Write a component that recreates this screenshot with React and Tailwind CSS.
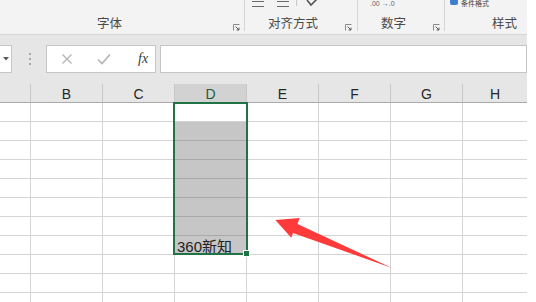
import React from 'react'

const cols = [
  { key: 'A', w: 'w-[31px]', label: '' },
  { key: 'B', w: 'w-[72px]', label: 'B' },
  { key: 'C', w: 'w-[72px]', label: 'C' },
  { key: 'D', w: 'w-[72px]', label: 'D' },
  { key: 'E', w: 'w-[72px]', label: 'E' },
  { key: 'F', w: 'w-[72px]', label: 'F' },
  { key: 'G', w: 'w-[72px]', label: 'G' },
  { key: 'H', w: 'w-[64px]', label: 'H' },
]

const rows = Array.from({ length: 11 }, (_, i) => i + 1)

function Launcher() {
  return (
    <svg width="7" height="7" viewBox="0 0 7 7" className="shrink-0">
      <path d="M0.5 6.5V0.5H6.5" fill="none" stroke="#8a8a8a" strokeWidth="1" />
      <path d="M2.5 2.5L6 6M6 3.6V6H3.6" fill="none" stroke="#5a5a5a" strokeWidth="1" />
    </svg>
  )
}

function Sep() {
  return <div className="w-px h-[31px] bg-[#d5d5d5] shrink-0" />
}

export default function App() {
  return (
    <div className="w-[536px] h-[302px] bg-white overflow-hidden relative font-['Liberation_Sans','Noto_Sans_CJK_SC',sans-serif]">
      <div className="w-[527px] h-full flex flex-col">
        {/* Ribbon */}
        <div className="h-[35px] bg-[#f3f3f3] border-b border-[#d6d6d6] flex shrink-0">
          {/* 字体 */}
          <div className="w-[244px] flex flex-col">
            <div className="h-[9px]" />
            <div className="flex items-center h-[17px] mt-[7px] pl-[97px] pr-[4px]">
              <span className="text-[12.5px] leading-none text-[#4a4a4a]">字体</span>
              <div className="ml-auto mt-[5px]"><Launcher /></div>
            </div>
          </div>
          <Sep />
          {/* 对齐方式 */}
          <div className="w-[112px] flex flex-col">
            <div className="h-[9px] overflow-hidden flex items-start pl-[7px]">
              <div className="flex flex-col gap-[4px] mt-[1px]">
                <div className="w-[12px] h-px bg-[#6a6a6a]" />
                <div className="w-[12px] h-px bg-[#6a6a6a]" />
              </div>
              <div className="flex flex-col gap-[4px] mt-[1px] ml-[13px]">
                <div className="w-[12px] h-px bg-[#6a6a6a]" />
                <div className="w-[12px] h-px bg-[#6a6a6a]" />
              </div>
              <div className="w-px h-[6px] bg-[#c8c8c8] ml-[7px]" />
              <svg width="12" height="8" viewBox="0 0 12 8" className="ml-[9px]">
                <path d="M1 0L5 5L11 -1" fill="none" stroke="#555" strokeWidth="1.6" />
              </svg>
            </div>
            <div className="flex items-center h-[17px] mt-[7px] pl-[23px] pr-[5px]">
              <span className="text-[12.5px] leading-none text-[#4a4a4a]">对齐方式</span>
              <div className="ml-auto mt-[5px]"><Launcher /></div>
            </div>
          </div>
          <Sep />
          {/* 数字 */}
          <div className="w-[86px] flex flex-col">
            <div className="h-[9px] pl-[12px] flex items-start">
              <div className="text-[7px] leading-none text-[#666] whitespace-nowrap">
                .00 <span className="text-[#2b6cc4]">→</span>.0
              </div>
            </div>
            <div className="flex items-center h-[17px] mt-[7px] pl-[23px] pr-[4px]">
              <span className="text-[12.5px] leading-none text-[#4a4a4a]">数字</span>
              <div className="ml-auto mt-[5px]"><Launcher /></div>
            </div>
          </div>
          <Sep />
          {/* 样式 */}
          <div className="flex-1 flex flex-col">
            <div className="h-[9px] pl-[5px] flex items-start">
              <div className="w-[8px] h-[5px] bg-[#3f7fd0] rounded-b-[2px] shrink-0" />
              <div className="ml-[3px] text-[7px] leading-none text-[#444] whitespace-nowrap">条件格式</div>
            </div>
            <div className="flex items-center h-[17px] mt-[7px] pl-[47px]">
              <span className="text-[12.5px] leading-none text-[#4a4a4a]">样式</span>
            </div>
          </div>
        </div>

        {/* Formula bar + column header band */}
        <div className="bg-[#e6e6e6] pt-[10px] shrink-0">
          <div className="h-[28px] flex">
            <div className="w-[12px] bg-white border-y border-r border-[#c6c6c6] flex items-center pl-[3px]">
              <svg width="6" height="4" viewBox="0 0 6 4"><path d="M0 0H6L3 3.5Z" fill="#5a5a5a" /></svg>
            </div>
            <div className="w-[34px] flex flex-col items-center justify-center gap-[3px] pl-[2px]">
              <div className="w-[2px] h-[2px] bg-[#a8a8a8]" />
              <div className="w-[2px] h-[2px] bg-[#a8a8a8]" />
              <div className="w-[2px] h-[2px] bg-[#a8a8a8]" />
            </div>
            <div className="w-[110px] bg-white border border-[#c6c6c6] flex items-center">
              <svg width="12" height="12" viewBox="0 0 12 12" className="ml-[14px]">
                <path d="M1.5 1.5L10.5 10.5M10.5 1.5L1.5 10.5" stroke="#b4b4b4" strokeWidth="1.3" />
              </svg>
              <svg width="14" height="12" viewBox="0 0 14 12" className="ml-[24px]">
                <path d="M1 6.5L5 10.5L13 1.5" fill="none" stroke="#b4b4b4" strokeWidth="1.6" />
              </svg>
              <span className="ml-[27px] font-['Liberation_Serif',serif] italic text-[14px] leading-none text-[#3a3a3a]">fx</span>
            </div>
            <div className="flex-1 ml-[4px] bg-white border border-[#c6c6c6]" />
          </div>
          <div className="h-[11px]" />
          {/* column headers */}
          <div className="h-[19px] flex border-b border-[#ababab]">
            {cols.map((c, i) => (
              <div
                key={c.key}
                className={`${c.w} h-full flex items-end justify-center pb-[1px] ${i < cols.length - 1 ? 'border-r border-[#c8c8c8]' : ''} ${c.key === 'D' ? 'bg-[#d2d2d2]' : ''}`}
              >
                <span className={`text-[14px] leading-none ${c.key === 'D' ? 'text-[#1f5c3c]' : 'text-[#262626]'}`}>{c.label}</span>
              </div>
            ))}
          </div>
        </div>

        {/* Grid */}
        <div className="flex flex-col">
          {rows.map(r => (
            <div key={r} className="h-[19px] flex shrink-0">
              {cols.map((c, i) => {
                const filled = c.key === 'D' && r >= 2 && r <= 8
                return (
                  <div
                    key={c.key}
                    className={`${c.w} h-full border-b ${i < cols.length - 1 ? 'border-r' : ''} ${filled ? 'bg-[#c6c6c6] border-[#a9a9a9]' : 'border-[#d4d4d4]'} flex items-end pl-[2px]`}
                  >
                    {c.key === 'D' && r === 8 && (
                      <span className="text-[15px] leading-none text-[#222] whitespace-nowrap">360新知</span>
                    )}
                  </div>
                )
              })}
            </div>
          ))}
        </div>
      </div>

      {/* Selection */}
      <div className="absolute left-[173px] top-[102px] w-[75px] h-[153px] border-2 border-[#217346] pointer-events-none" />
      <div className="absolute left-[243px] top-[250px] w-[7px] h-[7px] bg-[#217346] border border-white" />

      {/* Red arrow */}
      <svg className="absolute left-0 top-0 pointer-events-none" width="536" height="302" viewBox="0 0 536 302">
        <polygon
          points="275.3,220 299.7,218 297.5,224 392,268 293,233 291.3,237.7"
          fill="#ff3a3a"
        />
      </svg>
    </div>
  )
}
